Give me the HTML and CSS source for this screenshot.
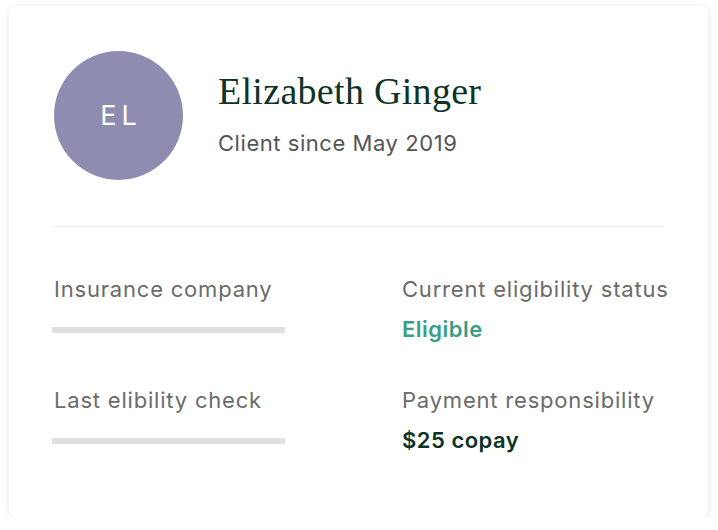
FILE: index.html
```html
<!DOCTYPE html>
<html>
<head>
<meta charset="utf-8">
<link rel="stylesheet" href="styles.css">
</head>
<body>
<div class="card">
  <div class="header">
    <div class="avatar">EL</div>
    <div class="who">
      <div class="name">Elizabeth Ginger</div>
      <div class="since">Client since May 2019</div>
    </div>
  </div>
  <div class="divider"></div>
  <div class="grid">
    <div class="field">
      <div class="label">Insurance company</div>
      <div class="bar"></div>
    </div>
    <div class="field">
      <div class="label">Current eligibility status</div>
      <div class="value eligible">Eligible</div>
    </div>
    <div class="field">
      <div class="label">Last elibility check</div>
      <div class="bar"></div>
    </div>
    <div class="field">
      <div class="label">Payment responsibility</div>
      <div class="value">$25 copay</div>
    </div>
  </div>
</div>
</body>
</html>
```
FILE: styles.css
```css
html, body {
  margin: 0;
  padding: 0;
  background: #ffffff;
}
body {
  font-family: "Inter", "Liberation Sans", sans-serif;
}
.card {
  margin: 6px 0 0 9px;
  width: 699px;
  height: 511px;
  box-sizing: border-box;
  padding: 45px 45px 0 45px;
  background: #fff;
  border-radius: 7px;
  box-shadow: 0 1px 7px rgba(0,0,0,0.11);
}
.header {
  display: flex;
  align-items: center;
  gap: 35px;
}
.avatar {
  width: 129px;
  height: 129px;
  border-radius: 50%;
  background: #8f8cb1;
  color: #fff;
  display: flex;
  align-items: center;
  justify-content: center;
  font-size: 27px;
  letter-spacing: 5px;
  padding-left: 5px;
  box-sizing: border-box;
  flex: none;
}
.who {
  padding-bottom: 6px;
}
.name {
  font-family: "Liberation Serif", serif;
  font-size: 38px;
  letter-spacing: 0.3px;
  color: #0d3326;
  line-height: 44px;
}
.since {
  margin-top: 17px;
  font-size: 22px;
  letter-spacing: 0.55px;
  color: #555;
  line-height: 26px;
}
.divider {
  margin-top: 46px;
  height: 1px;
  background: #ececec;
}
.grid {
  display: grid;
  grid-template-columns: 348px 1fr;
  row-gap: 45px;
  margin-top: 49px;
}
.label {
  font-size: 22px;
  letter-spacing: 0.8px;
  line-height: 26px;
  color: #6b6b6b;
  white-space: nowrap;
}
.bar {
  margin-top: 25px;
  width: 233px;
  height: 6px;
  margin-left: -2px;
  background: #e0e0e0;
}
.value {
  margin-top: 14px;
  font-size: 22px;
  letter-spacing: 0.5px;
  font-weight: 600;
  line-height: 26px;
  color: #0d3326;
}
.value.eligible {
  color: #3a9e87;
}
```
